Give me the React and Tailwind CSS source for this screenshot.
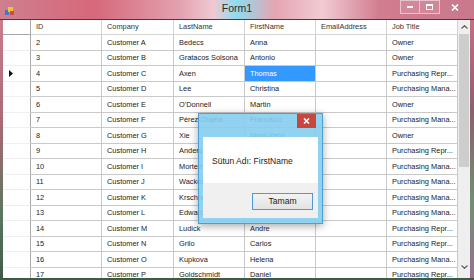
import React from 'react';

const rows = [
  ['2', 'Customer A', 'Bedecs', 'Anna', 'Owner'],
  ['3', 'Customer B', 'Gratacos Solsona', 'Antonio', 'Owner'],
  ['4', 'Customer C', 'Axen', 'Thomas', 'Purchasing Repr...'],
  ['5', 'Customer D', 'Lee', 'Christina', 'Purchasing Mana...'],
  ['6', 'Customer E', "O'Donnell", 'Martin', 'Owner'],
  ['7', 'Customer F', 'Pérez-Olaeta', 'Francisco', 'Purchasing Mana...'],
  ['8', 'Customer G', 'Xie', 'Ming-Yang', 'Owner'],
  // first names of these rows sit under the message box
  ['9', 'Customer H', 'Andersen', '', 'Purchasing Repr...'],
  ['10', 'Customer I', 'Mortensen', '', 'Purchasing Mana...'],
  ['11', 'Customer J', 'Wacker', '', 'Purchasing Mana...'],
  ['12', 'Customer K', 'Krschne', '', 'Purchasing Mana...'],
  ['13', 'Customer L', 'Edwards', '', 'Purchasing Mana...'],
  ['14', 'Customer M', 'Ludick', 'Andre', 'Purchasing Repr...'],
  ['15', 'Customer N', 'Grilo', 'Carlos', 'Purchasing Repr...'],
  ['16', 'Customer O', 'Kupkova', 'Helena', 'Purchasing Mana...'],
  ['17', 'Customer P', 'Goldschmidt', 'Daniel', 'Purchasing Repr...'],
];

const headers = ['ID', 'Company', 'LastName', 'FirstName', 'EmailAddress', 'Job Title'];

const cell = 'h-[15.5px] flex items-center pl-[5px] border-r border-b border-[#c9c9c9] whitespace-nowrap overflow-hidden';

const App = () => {
  return (
    <div className="relative w-[474px] h-[280px] overflow-hidden font-['Liberation_Sans',Arial,sans-serif] bg-[linear-gradient(90deg,#cf7f8e_0%,#d6687a_20%,#e3a2b0_38%,#f0c9d2_45%,#8fdcef_50%,#e6a4b2_58%,#f1cbd3_68%,#d27d90_80%,#c9788c_100%)]">
      {/* title bar */}
      <div className="h-[20px] grid grid-cols-[1fr_auto_1fr] items-start border-b border-[#3f3f3f]">
        <div className="pl-[5px] pt-[7px]">
          <svg width="9" height="8" viewBox="0 0 9 8">
            <rect x="0" y="3" width="4" height="5" fill="#3b79c9" />
            <rect x="3" y="0" width="5" height="5" fill="#f2c230" />
            <rect x="5" y="4" width="4" height="4" fill="#d8493b" />
          </svg>
        </div>
        <div className="pt-[3px] text-[10.5px] text-[#2b2b2b] leading-none">Form1</div>
        <div className="flex justify-end pr-[4px]">
          <div className="w-[20px] h-[14px] border border-white/50 bg-white/10 flex items-center justify-center">
            <div className="w-[6px] h-[2px] bg-white" />
          </div>
          <div className="w-[20px] h-[14px] border border-l-0 border-white/50 bg-white/10 flex items-center justify-center">
            <div className="w-[7px] h-[6px] border border-white border-t-2" />
          </div>
          <div className="w-[30px] h-[14px] flex items-center justify-center">
            <svg width="8" height="7" viewBox="0 0 8 7">
              <path d="M1 0.5 L7 6.5 M7 0.5 L1 6.5" stroke="#ffffff" strokeWidth="1.6" />
            </svg>
          </div>
        </div>
      </div>

      {/* body */}
      <div className="flex h-[260px]">
        <div className="w-[3px] bg-[linear-gradient(180deg,#c97c8c_0%,#a86a74_40%,#5b7560_75%,#3f5b47_100%)]" />
        <div className="flex-1 flex bg-white overflow-hidden">
          <div className="grid grid-cols-[28px_71px_72px_71px_71px_71px_71px] content-start text-[7.4px] text-[#1b1b1b]">
            {/* header */}
            <div className="h-[15px] border-r border-b border-[#a8a8a8]" />
            {headers.map((h) => (
              <div key={h} className="h-[15px] flex items-center pl-[5px] border-r border-b border-[#d4d4d4] text-[#333]">
                {h}
              </div>
            ))}
            {rows.map((r, i) => (
              <React.Fragment key={r[0]}>
                <div className="h-[15.5px] flex items-center pl-[6px] border-r border-b border-r-[#a8a8a8] border-b-[#f0f0f0]">
                  {i === 2 && (
                    <svg width="4" height="7" viewBox="0 0 4 7">
                      <path d="M0 0 L4 3.5 L0 7 Z" fill="#111" />
                    </svg>
                  )}
                </div>
                <div className={cell}>{r[0]}</div>
                <div className={cell}>{r[1]}</div>
                <div className={cell}>{r[2]}</div>
                <div className={`${cell} ${i === 2 ? 'bg-[#3399ff] text-white' : ''}`}>{r[3]}</div>
                <div className={cell} />
                <div className={cell}>{r[4]}</div>
              </React.Fragment>
            ))}
          </div>
          {/* scrollbar */}
          <div className="w-[12px] bg-[#efefef] flex flex-col">
            <div className="h-[14px] flex items-center justify-center">
              <svg width="7" height="4" viewBox="0 0 7 4">
                <path d="M0.5 3.5 L3.5 0.7 L6.5 3.5" stroke="#606060" strokeWidth="1.2" fill="none" />
              </svg>
            </div>
            <div className="mx-[1px] h-[133px] bg-[#cdcdcd]" />
            <div className="flex-1" />
            <div className="h-[14px] mb-[6px] flex items-center justify-center">
              <svg width="7" height="4" viewBox="0 0 7 4">
                <path d="M0.5 0.5 L3.5 3.3 L6.5 0.5" stroke="#606060" strokeWidth="1.2" fill="none" />
              </svg>
            </div>
          </div>
        </div>
        <div className="w-[4px] bg-[linear-gradient(180deg,#c56f84_0%,#8e5f6e_35%,#6f8f72_70%,#9a7090_100%)]" />
      </div>
      <div className="absolute left-0 right-0 bottom-0 h-[2px] bg-[#3c5a44]" />

      {/* message box */}
      <div className="absolute left-[198px] top-[113px] w-[125px] h-[111px] border border-[#4b9fd3] bg-[#86cdf0]/90 shadow-[0_2px_8px_rgba(0,0,0,0.35)] flex flex-col pt-[23px] px-[4px] pb-[5px]">
        <div className="absolute right-[6px] top-0 w-[19px] h-[14px] bg-[#c9463d] flex items-center justify-center">
          <svg width="7" height="6" viewBox="0 0 7 6">
            <path d="M1 0.5 L6 5.5 M6 0.5 L1 5.5" stroke="#ffffff" strokeWidth="1.6" />
          </svg>
        </div>
        <div className="h-[46px] bg-white flex items-center pl-[9px] pt-[2px] text-[8.5px] text-[#1b1b1b]">
          Sütun Adı: FirstName
        </div>
        <div className="flex-1 bg-[#f0f0f0] flex justify-end items-start pt-[10px] pr-[5px]">
          <div className="w-[61px] h-[17px] border border-[#4f9ad3] bg-[linear-gradient(180deg,#f3f3f3,#e3e3e3)] flex items-center justify-center text-[8.6px] text-[#1b1b1b]">
            Tamam
          </div>
        </div>
      </div>
    </div>
  );
};

export default App;
